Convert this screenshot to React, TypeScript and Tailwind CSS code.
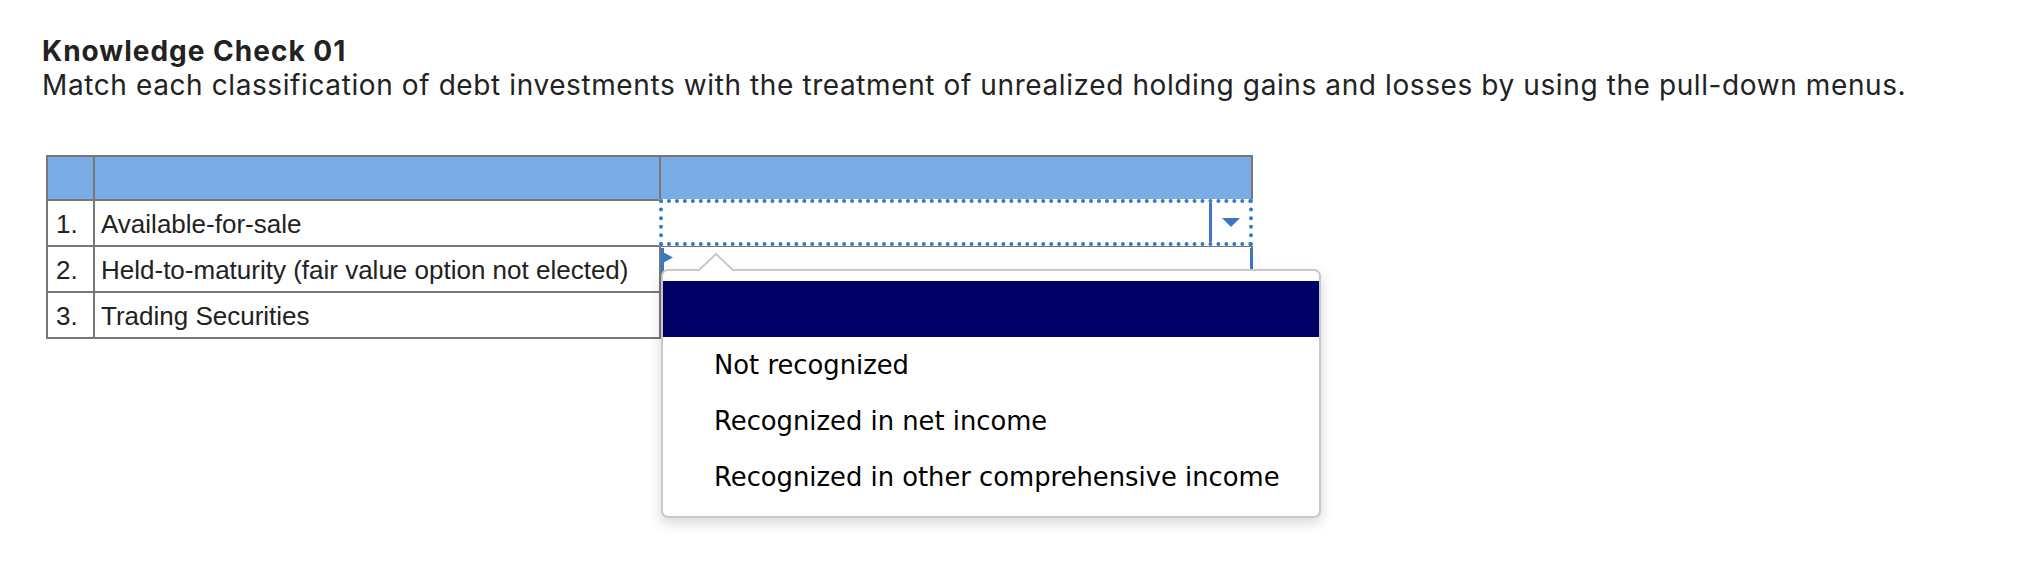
import { useState } from 'react';

const rows = [
  { num: '1.', label: 'Available-for-sale' },
  { num: '2.', label: 'Held-to-maturity (fair value option not elected)' },
  { num: '3.', label: 'Trading Securities' },
];

const options = [
  'Not recognized',
  'Recognized in net income',
  'Recognized in other comprehensive income',
];

const App = () => {
  const [selected, setSelected] = useState<string>('');

  return (
    <div className="w-[2026px] h-[582px] bg-white pl-[42px] pt-[34px] text-[#222] font-['Inter',sans-serif]">
      <h1 className="text-[28px] leading-[34px] font-bold tracking-[1px]">Knowledge Check 01</h1>
      <p className="text-[28px] leading-[34px] tracking-[0.6px]">
        Match each classification of debt investments with the treatment of unrealized holding gains and losses by using the pull-down menus.
      </p>

      <div className="relative mt-[53px] ml-[4px] w-[1207px] font-['Liberation_Sans',Arial,sans-serif] text-[26px]">
        {/* table */}
        <div className="grid grid-cols-[47px_566px_592px] border-l-2 border-t-2 border-[#777]">
          <div className="h-[44px] bg-[#79ace4] border-r-2 border-b-2 border-[#777]" />
          <div className="h-[44px] bg-[#79ace4] border-r-2 border-b-2 border-[#777]" />
          <div className="h-[44px] bg-[#79ace4] border-r-2 border-b-2 border-[#777]" />
          {rows.map((row, i) => (
            <div key={row.num} className="contents">
              <div className="h-[46px] flex items-center pl-[8px] pt-[3px] border-r-2 border-b-2 border-[#777]">
                {row.num}
              </div>
              <div className="h-[46px] flex items-center pl-[6px] pt-[3px] border-r-2 border-b-2 border-[#777] whitespace-nowrap">
                {row.label}
              </div>
              <div className="h-[46px] relative border-r-2 border-b-2 border-[#777]">
                {i === 0 && (
                  <div className="absolute -left-[2px] -top-[2px] -right-[2px] -bottom-[1px] border-[4px] border-dotted border-[#3b78c1] bg-white z-10">
                    <span className="absolute left-2 top-1/2 -translate-y-1/2">{selected}</span>
                    <div className="absolute right-0 top-0 bottom-0 w-[40px] border-l-[3px] border-[#3b78c1] flex items-center justify-center">
                      <svg width="18" height="10" viewBox="0 0 18 10">
                        <polygon points="0,0 18,0 9,9" fill="#3b78c1" />
                      </svg>
                    </div>
                  </div>
                )}
                {i === 1 && (
                  <div className="absolute left-0 top-[1px] -right-[2px] bottom-0 border-l-[3px] border-r-[3px] border-[#3b78c1]">
                    <svg className="absolute -left-[3px] top-[3px]" width="12" height="13" viewBox="0 0 12 13">
                      <polygon points="0,0 12,6.5 0,13" fill="#3b78c1" />
                    </svg>
                  </div>
                )}
              </div>
            </div>
          ))}
        </div>

        {/* dropdown menu */}
        <div className="absolute left-[615px] top-[114px] w-[660px] z-20">
          <svg className="absolute left-[38px] -top-[16px] z-30" width="34" height="19" viewBox="0 0 34 19">
            <polygon points="0,18 17,1 34,18" fill="#fff" />
            <polyline points="0,17 17,1 34,17" fill="none" stroke="#c8c8c8" strokeWidth="2" />
          </svg>
          <div className="bg-white border-2 border-[#c8c8c8] rounded-[7px] shadow-[0_5px_14px_rgba(0,0,0,0.16)] pt-[10px] pb-[11px] font-['DejaVu_Sans',Verdana,sans-serif] text-[25.8px] text-black">
            <div className="h-[56px] bg-[#000066]" />
            {options.map((opt) => (
              <div
                key={opt}
                onClick={() => setSelected(opt)}
                className="h-[56px] flex items-center pl-[51px] cursor-pointer"
              >
                {opt}
              </div>
            ))}
          </div>
        </div>
      </div>
    </div>
  );
};

export default App;
